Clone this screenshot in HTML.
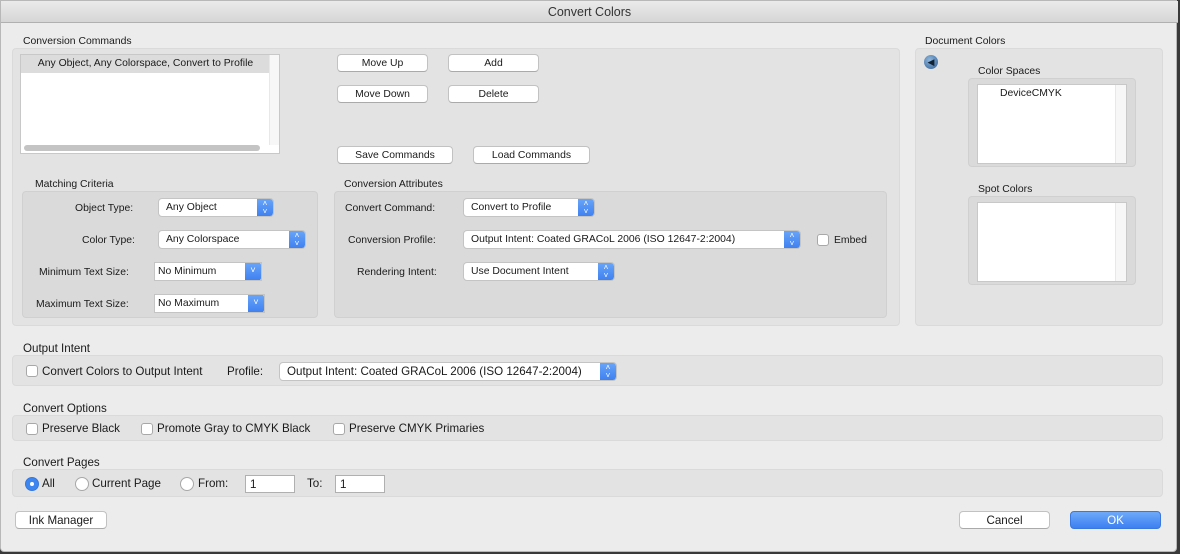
<!DOCTYPE html>
<html><head><meta charset="utf-8"><style>
*{box-sizing:border-box;margin:0;padding:0}
body{width:1180px;height:554px;overflow:hidden;background:#3a3a3a;font-family:"Liberation Sans",sans-serif;font-size:10.4px;color:#1a1a1a;position:relative}
.win{position:absolute;left:0;top:0;width:1177px;height:552px;background:#ececec;border:1px solid #b8b8b8;border-radius:0 0 4px 4px}
.title{position:absolute;left:0;top:0;width:1177px;height:22px;background:linear-gradient(#ebebeb,#d6d6d6);border-bottom:1px solid #b0b0b0;text-align:center;font-size:12.5px;line-height:23px;color:#333}
.a{position:absolute;white-space:nowrap;margin-top:1px}
.b{font-size:11.6px}
.box{position:absolute;background:#e3e3e3;border:1px solid #dadada;border-radius:4px}
.ibox{position:absolute;background:#dadada;border:1px solid #d0d0d0;border-radius:4px}
.btn{position:absolute;height:18px;background:#fff;border:1px solid #c2c2c2;border-bottom-color:#aaa;border-radius:4px;text-align:center;line-height:17px}
.sel{position:absolute;height:19px;background:#fff;border:1px solid #c4c4c4;border-radius:4px;line-height:17px;padding-left:7px;overflow:hidden}
.sel .ar{position:absolute;right:0;top:-1px;width:16px;height:19px;background:linear-gradient(#6aa6f8,#3d7ff0);border-radius:0 4px 4px 0;color:#fff;font-size:8px;text-align:center;line-height:8px;padding-top:2px}
.sel.sq{border-radius:0}
.sel.sq .ar{border-radius:0 3px 3px 0;font-size:9px;line-height:17px;padding-top:0}
.cb{position:absolute;width:12px;height:12px;background:#fff;border:1px solid #a8a8a8;border-radius:3px}
.rd{position:absolute;width:14px;height:14px;background:#fff;border:1px solid #a8a8a8;border-radius:50%}
.list{position:absolute;background:#fff;border:1px solid #c8c8c8}
.inp{position:absolute;height:18px;background:#fff;border:1px solid #b0b0b0;padding-left:4px;line-height:18px}
</style></head><body>
<div class="win">
<div class="title">Convert Colors</div>
</div>

<div class="a" style="left:23px;top:35px">Conversion Commands</div>
<div class="box" style="left:12px;top:48px;width:888px;height:278px"></div>
<div class="list" style="left:20px;top:54px;width:260px;height:100px">
 <div style="position:absolute;left:0;top:0;width:249px;height:18px;background:#dcdcdc;text-align:center;line-height:18px">Any Object, Any Colorspace, Convert to Profile</div>
 <div style="position:absolute;right:0;top:0;width:10px;height:90px;background:#f7f7f7;border-left:1px solid #e8e8e8"></div>
 <div style="position:absolute;left:3px;top:90px;width:236px;height:6px;background:#c4c4c4;border-radius:3px"></div>
</div>
<div class="btn" style="left:337px;top:54px;width:91px">Move Up</div>
<div class="btn" style="left:448px;top:54px;width:91px">Add</div>
<div class="btn" style="left:337px;top:85px;width:91px">Move Down</div>
<div class="btn" style="left:448px;top:85px;width:91px">Delete</div>
<div class="btn" style="left:337px;top:146px;width:116px">Save Commands</div>
<div class="btn" style="left:473px;top:146px;width:117px">Load Commands</div>

<div class="a" style="left:35px;top:178px">Matching Criteria</div>
<div class="ibox" style="left:22px;top:191px;width:296px;height:127px"></div>
<div class="a" style="left:75px;top:202px">Object Type:</div>
<div class="sel" style="left:158px;top:198px;width:116px">Any Object<div class="ar">˄<br>˅</div></div>
<div class="a" style="left:82px;top:234px">Color Type:</div>
<div class="sel" style="left:158px;top:230px;width:148px">Any Colorspace<div class="ar">˄<br>˅</div></div>
<div class="a" style="left:39px;top:266px">Minimum Text Size:</div>
<div class="sel sq" style="left:154px;top:262px;width:108px;padding-left:3px">No Minimum<div class="ar">˅</div></div>
<div class="a" style="left:36px;top:298px">Maximum Text Size:</div>
<div class="sel sq" style="left:154px;top:294px;width:111px;padding-left:3px">No Maximum<div class="ar">˅</div></div>

<div class="a" style="left:344px;top:178px">Conversion Attributes</div>
<div class="ibox" style="left:334px;top:191px;width:553px;height:127px"></div>
<div class="a" style="left:345px;top:202px">Convert Command:</div>
<div class="sel" style="left:463px;top:198px;width:132px">Convert to Profile<div class="ar">˄<br>˅</div></div>
<div class="a" style="left:348px;top:234px">Conversion Profile:</div>
<div class="sel" style="left:463px;top:230px;width:338px">Output Intent: Coated GRACoL 2006 (ISO 12647-2:2004)<div class="ar">˄<br>˅</div></div>
<div class="cb" style="left:817px;top:234px"></div>
<div class="a" style="left:834px;top:234px">Embed</div>
<div class="a" style="left:357px;top:266px">Rendering Intent:</div>
<div class="sel" style="left:463px;top:262px;width:152px">Use Document Intent<div class="ar">˄<br>˅</div></div>

<div class="a" style="left:925px;top:35px">Document Colors</div>
<div class="box" style="left:915px;top:48px;width:248px;height:278px"></div>
<div class="a" style="left:924px;top:54px;width:14px;height:14px;border-radius:50%;background:radial-gradient(circle at 40% 35%,#8fb6dc,#2f5f95);color:#123;font-size:9px;line-height:14px;text-align:center">◀</div>
<div class="a" style="left:978px;top:65px">Color Spaces</div>
<div class="ibox" style="left:968px;top:78px;width:168px;height:89px"></div>
<div class="list" style="left:977px;top:84px;width:150px;height:80px"><div style="position:absolute;left:22px;top:3px">DeviceCMYK</div><div style="position:absolute;right:0;top:0;width:11px;height:78px;background:#f7f7f7;border-left:1px solid #e8e8e8"></div></div>
<div class="a" style="left:978px;top:183px">Spot Colors</div>
<div class="ibox" style="left:968px;top:196px;width:168px;height:89px"></div>
<div class="list" style="left:977px;top:202px;width:150px;height:80px"><div style="position:absolute;right:0;top:0;width:11px;height:78px;background:#f7f7f7;border-left:1px solid #e8e8e8"></div></div>

<div class="a b" style="left:23px;top:341px">Output Intent</div>
<div class="box" style="left:12px;top:355px;width:1151px;height:31px"></div>
<div class="cb" style="left:26px;top:365px"></div>
<div class="a b" style="left:42px;top:364px">Convert Colors to Output Intent</div>
<div class="a b" style="left:227px;top:364px">Profile:</div>
<div class="sel b" style="left:279px;top:362px;width:338px">Output Intent: Coated GRACoL 2006 (ISO 12647-2:2004)<div class="ar">˄<br>˅</div></div>

<div class="a b" style="left:23px;top:401px">Convert Options</div>
<div class="box" style="left:12px;top:415px;width:1151px;height:26px"></div>
<div class="cb" style="left:26px;top:423px"></div><div class="a b" style="left:42px;top:421px">Preserve Black</div>
<div class="cb" style="left:141px;top:423px"></div><div class="a b" style="left:157px;top:421px">Promote Gray to CMYK Black</div>
<div class="cb" style="left:333px;top:423px"></div><div class="a b" style="left:349px;top:421px">Preserve CMYK Primaries</div>

<div class="a b" style="left:23px;top:455px">Convert Pages</div>
<div class="box" style="left:12px;top:469px;width:1151px;height:28px"></div>
<div class="rd" style="left:25px;top:477px;background:#3d86f0;border-color:#3578e0"><div style="position:absolute;left:4px;top:4px;width:4px;height:4px;border-radius:50%;background:#fff"></div></div>
<div class="a b" style="left:42px;top:476px">All</div>
<div class="rd" style="left:75px;top:477px"></div><div class="a b" style="left:92px;top:476px">Current Page</div>
<div class="rd" style="left:180px;top:477px"></div><div class="a b" style="left:198px;top:476px">From:</div>
<div class="inp b" style="left:245px;top:475px;width:50px">1</div>
<div class="a b" style="left:307px;top:476px">To:</div>
<div class="inp b" style="left:335px;top:475px;width:50px">1</div>

<div class="btn b" style="left:15px;top:511px;width:92px">Ink Manager</div>
<div class="btn b" style="left:959px;top:511px;width:91px">Cancel</div>
<div class="btn b" style="left:1070px;top:511px;width:91px;background:linear-gradient(#6fa9f8,#3c80f2);border-color:#3a78e0;color:#fff">OK</div>
</body></html>
